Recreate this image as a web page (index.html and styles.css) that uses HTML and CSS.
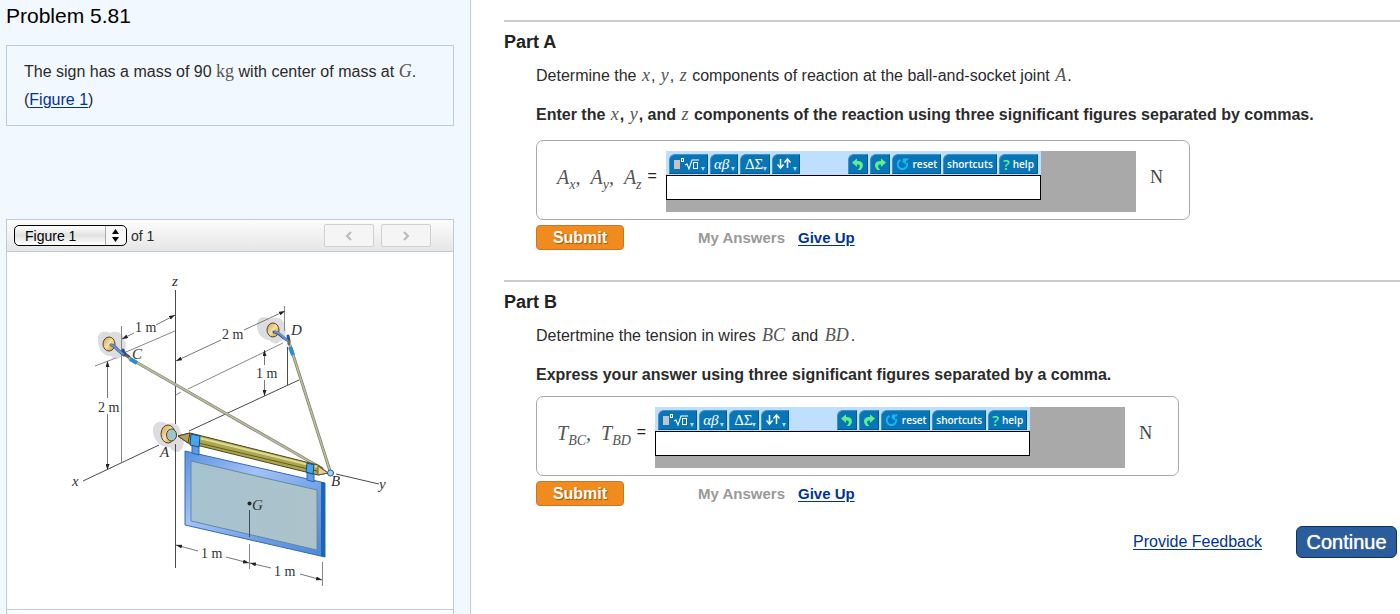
FILE: index.html
```html
<!DOCTYPE html>
<html lang="en">
<head>
<meta charset="utf-8">
<title>Problem 5.81</title>
<link rel="stylesheet" href="styles.css">
</head>
<body>
<svg class="defs" aria-hidden="true">
  <symbol id="i-template" viewBox="0 0 25 15">
    <rect x="0" y="3" width="6" height="9" fill="#c4c4c4"/>
    <rect x="7.500" y="1.500" width="2" height="3" fill="none" stroke="#fff"/>
    <path d="M11 8l2-1 2 5 3-9h7" fill="none" stroke="#fff" stroke-width="1.100"/>
    <rect x="19.500" y="5.500" width="4" height="6" fill="none" stroke="#fff"/>
  </symbol>
  <symbol id="i-arrows" viewBox="0 0 14 14">
    <path d="M3.500 2v8M10.500 11V3" stroke="#fff" stroke-width="1.500"/>
    <path d="M.5 7.500l3 3.500 3-3.500M7.500 5.500l3-3.500 3 3.500" fill="none" stroke="#fff" stroke-width="1.500"/>
  </symbol>
  <symbol id="i-undo" viewBox="0 0 14 14">
    <path d="M1 5.500l5-4V4c6-.5 8 5 3.500 9H6.500c3.500-3 3-6-.5-5.500V10z" fill="#5ff08a"/>
  </symbol>
  <symbol id="i-reset" viewBox="0 0 14 14">
    <path d="M4.500 3a4.700 4.700 0 1 0 6.500 3" fill="none" stroke="#16b7f5" stroke-width="2"/>
    <path d="M7 1.500h6l-1.500 2H10v4L6.500 5z" fill="#16b7f5"/>
  </symbol>
</svg>

<div class="page">
  <aside class="sidebar">
    <h1 class="problem-title">Problem 5.81</h1>
    <section class="statement">
      <p>The sign has a mass of 90 <span class="math upright">kg</span> with center of mass at <span class="math">G</span>.</p>
      <p>(<a href="#figure">Figure 1</a>)</p>
    </section>

    <section class="figure-panel" id="figure">
      <header class="figure-bar">
        <span class="picker">
          <select id="figure-select" aria-label="Figure"><option>Figure 1</option></select>
          <svg class="picker-arrows" viewBox="0 0 7 13" aria-hidden="true"><path d="M0 5l3.500-5L7 5zM0 8l3.500 5L7 8z"/></svg>
        </span>
        <label for="figure-select">of 1</label>
        <span class="pager">
          <button type="button" aria-label="Previous figure"><svg viewBox="0 0 8 10"><path d="M6 1L2 5l4 4"/></svg></button>
          <button type="button" aria-label="Next figure"><svg viewBox="0 0 8 10"><path d="M2 1l4 4-4 4"/></svg></button>
        </span>
      </header>
      <svg class="diagram" viewBox="7 252 446 357" role="img" aria-label="Sign hanging from a pole supported by two wires">
        <defs>
          <marker id="tip" viewBox="0 0 6 4" refX="6" refY="2" markerWidth="6" markerHeight="4" markerUnits="userSpaceOnUse" orient="auto-start-reverse"><path d="M0 0l6 2-6 2z" fill="#222"/></marker>
          <linearGradient id="frame" x1="0" y1="0" x2="1" y2="1"><stop offset="0" stop-color="#5a90e0"/><stop offset=".35" stop-color="#a4c2f6"/><stop offset=".7" stop-color="#6c9ce8"/><stop offset="1" stop-color="#4c86d8"/></linearGradient>
          <linearGradient id="inset" x1="0" y1="0" x2="1" y2="0"><stop offset="0" stop-color="#a6c2d0"/><stop offset="1" stop-color="#adc3ca"/></linearGradient>
          <linearGradient id="brass" x1="0" y1="0" x2="1" y2="1"><stop offset="0" stop-color="#c99f55"/><stop offset=".5" stop-color="#f6dfa6"/><stop offset="1" stop-color="#bd9418"/></linearGradient>
        </defs>
        <g fill="#dcdce1">
          <path d="M98 338c0-7 8-7 12-5 6-3 14 0 14 7 4 5 1 11-2 14-1 6-8 7-11 2-7 1-14-7-13-18z"/>
          <path d="M257 324c1-8 8-8 13-5 7-3 15 0 15 8 2 7 0 14-5 14-4 5-8 2-11-1-6 0-13-7-12-16z"/>
          <path d="M153 429c1-8 9-9 14-5 6-2 13 0 13 7 5 6 5 15 1 19-4 4-9 1-11-3-9 2-18-8-17-18z"/>
        </g>
        <g class="axes">
          <path d="M175.500 290V424M175.500 444V568M83 481L159 445M189 431L299 380M336 474L379 484M287.500 347V385"/>
        </g>
        <g class="guides">
          <path d="M121.500 326V462M95 366L116 358M126 352L175 331M176 395L181 392M188 389L283 343M284.500 306V331M249.500 544V569M322.500 562V586"/>
        </g>
        <g class="dims">
          <path marker-end="url(#tip)" d="M134 333L122 339"/>
          <path marker-end="url(#tip)" d="M156 325L175 315"/>
          <path marker-end="url(#tip)" d="M221 340L176 361"/>
          <path marker-end="url(#tip)" d="M244 330L285 311"/>
          <path marker-end="url(#tip)" d="M107.500 398V361"/>
          <path marker-end="url(#tip)" d="M107.500 414V470"/>
          <path marker-end="url(#tip)" d="M264.500 365V350"/>
          <path marker-end="url(#tip)" d="M264.500 380V396"/>
          <path marker-end="url(#tip)" d="M198 551L176 545"/>
          <path marker-end="url(#tip)" d="M226 557L249 563"/>
          <path marker-end="url(#tip)" d="M271 568L250 563"/>
          <path marker-end="url(#tip)" d="M300 574L322 580"/>
        </g>
        <g class="mount">
          <ellipse cx="109" cy="344" rx="6" ry="7" fill="url(#brass)"/>
          <ellipse cx="273" cy="330" rx="6" ry="7" fill="url(#brass)"/>
          <ellipse cx="168" cy="434" rx="7" ry="9" fill="url(#brass)"/>
          <ellipse cx="171.500" cy="435" rx="5" ry="6" fill="#9ec5ca"/>
        </g>
        <g fill="none" stroke-linecap="round">
          <path d="M111 345c3 0 5 3 8 6l5 4m-1-5l2 4 4 3M274 332c5 0 7 5 13 8m1-4l1 5v3" stroke="#31508d" stroke-width="3"/>
          <path d="M111 345c3 0 5 3 8 6l4 3M275 332c5 0 7 5 12 8" stroke="#6c92d4" stroke-width="2"/>
          <path d="M126 356l3 2M289 341l0 3" stroke="#7d702b" stroke-width="2"/>
        </g>
        <path d="M129 358L323 469M290 345L330 471" stroke="#85856b" stroke-width="3"/>
        <path d="M129 358L323 469M290 345L330 471" stroke="#bdbda4" stroke-width="1.500"/>
        <path d="M130 359L137 363M290 347L293 355" stroke="#258ed4" stroke-width="4"/>
        <path d="M185 451L321 482 325 483V557L185 525z" fill="url(#frame)" stroke="#356bb5"/>
        <path d="M321 482L325 483V557L321 556z" fill="#1d64b5"/>
        <path d="M191 461L317 490V550L191 521z" fill="url(#inset)" stroke="#64889f"/>
        <path d="M192 440h7v15l-7-2zM307 465h7v17l-7-2z" fill="#5c9be8" stroke="#2e64ad"/>
        <path d="M178 436L190 433 318 465 328 473 318 475 188 443z" fill="#aaa54f" stroke="#4a4620"/>
        <path d="M191 436L318 467" stroke="#dfda8c" stroke-width="2"/>
        <path d="M190 441L317 471" stroke="#5f5a20"/>
        <path d="M178 436L190 433 188 443z" fill="#b5a168" stroke="#4a4620"/>
        <path d="M318 466L328 473 318 475z" fill="#e4cf98" stroke="#6a5c32"/>
        <path d="M191 434l9 2-1 11-9-2zM307 463l7 2-1 9-7-2z" fill="#4aa5e8" stroke="#174a85"/>
        <circle cx="330.500" cy="473" r="3" fill="#9cd2fb" stroke="#245a8c"/>
        <circle cx="249.500" cy="503.500" r="2" fill="#222"/>
        <path d="M249.500 510V537" stroke="#3c5060"/>
        <g class="dim-text">
          <text x="135" y="332">1 m</text><text x="222" y="339">2 m</text>
          <text x="256" y="378">1 m</text><text x="98" y="412">2 m</text>
          <text x="201" y="558">1 m</text><text x="274" y="576">1 m</text>
        </g>
        <g class="point-text">
          <text x="172" y="286">z</text><text x="72" y="486">x</text><text x="379" y="489">y</text>
          <text x="132" y="359">C</text><text x="291" y="335">D</text><text x="160" y="457">A</text>
          <text x="331" y="486">B</text><text x="252" y="510">G</text>
        </g>
      </svg>
      <div class="figure-foot"></div>
    </section>
  </aside>

  <main class="main">
    <section class="part part-a">
      <h2>Part A</h2>
      <div class="part-body">
        <p>Determine the <span class="math">x</span>, <span class="math">y</span>, <span class="math">z</span> components of reaction at the ball-and-socket joint <span class="math">A</span>.</p>
        <p class="instruction">Enter the <span class="math">x</span>, <span class="math">y</span>, and <span class="math">z</span> components of the reaction using three significant figures separated by commas.</p>
        <div class="answer">
          <label class="answer-label" for="answer-a"><span class="term">A<sub>x</sub>,</span><span class="term">A<sub>y</sub>,</span><span class="term">A<sub>z</sub></span><span class="equals">=</span></label>
          <div class="editor">
            <div class="editor-inner">
              <div class="toolbar">
                <button type="button" class="tool drop template" aria-label="Templates"><svg><use href="#i-template"/></svg></button>
                <button type="button" class="tool drop greek"><i>αβ</i></button>
                <button type="button" class="tool drop sums">ΔΣ</button>
                <button type="button" class="tool drop arrows" aria-label="Arrows"><svg><use href="#i-arrows"/></svg></button>
                <span class="spacer"></span>
                <button type="button" class="tool square" aria-label="Undo"><svg><use href="#i-undo"/></svg></button>
                <button type="button" class="tool square redo" aria-label="Redo"><svg><use href="#i-undo"/></svg></button>
                <button type="button" class="tool reset"><svg><use href="#i-reset"/></svg>reset</button>
                <button type="button" class="tool shortcuts">shortcuts</button>
                <button type="button" class="tool help"><span class="question">?</span>help</button>
              </div>
              <input class="answer-input" id="answer-a" type="text">
            </div>
          </div>
          <span class="unit">N</span>
        </div>
        <div class="actions"><button type="button" class="submit">Submit</button><span class="my-answers">My Answers</span><a href="#give-up-a">Give Up</a></div>
      </div>
    </section>

    <section class="part part-b">
      <h2>Part B</h2>
      <div class="part-body">
        <p>Detertmine the tension in wires <span class="math wide">BC</span> and <span class="math wide">BD</span>.</p>
        <p class="instruction">Express your answer using three significant figures separated by a comma.</p>
        <div class="answer">
          <label class="answer-label" for="answer-b"><span class="term">T<sub>BC</sub>,</span><span class="term">T<sub>BD</sub></span><span class="equals">=</span></label>
          <div class="editor">
            <div class="editor-inner">
              <div class="toolbar">
                <button type="button" class="tool drop template" aria-label="Templates"><svg><use href="#i-template"/></svg></button>
                <button type="button" class="tool drop greek"><i>αβ</i></button>
                <button type="button" class="tool drop sums">ΔΣ</button>
                <button type="button" class="tool drop arrows" aria-label="Arrows"><svg><use href="#i-arrows"/></svg></button>
                <span class="spacer"></span>
                <button type="button" class="tool square" aria-label="Undo"><svg><use href="#i-undo"/></svg></button>
                <button type="button" class="tool square redo" aria-label="Redo"><svg><use href="#i-undo"/></svg></button>
                <button type="button" class="tool reset"><svg><use href="#i-reset"/></svg>reset</button>
                <button type="button" class="tool shortcuts">shortcuts</button>
                <button type="button" class="tool help"><span class="question">?</span>help</button>
              </div>
              <input class="answer-input" id="answer-b" type="text">
            </div>
          </div>
          <span class="unit">N</span>
        </div>
        <div class="actions"><button type="button" class="submit">Submit</button><span class="my-answers">My Answers</span><a href="#give-up-b">Give Up</a></div>
      </div>
    </section>

    <footer class="footer">
      <a href="#feedback">Provide Feedback</a>
      <button type="button" class="continue">Continue</button>
    </footer>
  </main>
</div>
</body>
</html>
```

FILE: styles.css
```css
* { box-sizing: border-box; }

body {
  margin: 0;
  background: #fff;
  color: #2b2b2b;
  font: 16px/20px "Liberation Sans", Arial, sans-serif;
}

h1, h2, p { margin: 0; }
a { color: #003399; text-underline-offset: 2px; }
button, input, select { font-family: inherit; margin: 0; }
.defs { display: none; }

.page { display: flex; min-height: 100vh; }

/* Sidebar */
.sidebar {
  display: flex;
  flex-direction: column;
  flex: 0 0 471px;
  padding: 4px 16px 0 6px;
  background: #f2f8ff;
  border-right: 1px solid #b9cde0;
}

.problem-title { color: #000; font-size: 21px; font-weight: 400; line-height: 24px; }

.statement {
  margin: 17px 0 93px;
  padding: 12px 17px 11px;
  border: 1px solid #b9cde0;
  line-height: 28px;
}

.math {
  padding: 0 1px;
  color: #555;
  font: italic 18px/16px "Liberation Serif", "Times New Roman", serif;
}
.math.upright { font-style: normal; }
.math.wide { padding: 0 2px; }
.statement .math { padding: 0; }

.figure-panel {
  display: flex;
  flex-direction: column;
  flex: 1;
  background: #fff;
  border: 1px solid #b9cde0;
  border-bottom: 0;
}

.figure-bar {
  display: flex;
  align-items: center;
  gap: 4px;
  height: 32px;
  padding: 0 22px 0 7px;
  background: linear-gradient(#fdfdfd, #e6e6e6);
  border-bottom: 1px solid #b9cde0;
  font-size: 14px;
}

.picker { position: relative; display: flex; }
.picker select {
  width: 113px;
  height: 21px;
  padding: 0 10px;
  appearance: none;
  border: 1px solid #000;
  border-radius: 5px;
  background: linear-gradient(90deg, transparent 90px, #aaa 90px, #aaa 91px, #f7f7f7 91px), linear-gradient(#fff, #e2e2e2 50%, #fff);
  color: #000;
  font-size: 14px;
}
.picker-arrows { position: absolute; top: 4px; right: 8px; width: 7px; height: 13px; pointer-events: none; }

.pager { display: flex; gap: 7px; margin-left: auto; }
.pager button {
  display: grid;
  place-items: center;
  width: 50px;
  height: 23px;
  padding: 0;
  border: 1px solid #d0d0d0;
  border-radius: 2px;
  background: #f5f5f5;
}
.pager svg { width: 8px; height: 10px; fill: none; stroke: #b9b9b9; stroke-width: 2; }

.diagram { display: block; width: 100%; font-family: "Liberation Serif", serif; }
.axes path { fill: none; stroke: #4a4a4a; }
.guides path { fill: none; stroke: #888; }
.dims path { fill: none; stroke: #777; }
.mount ellipse { stroke: #54461d; }
.dim-text { font-size: 14px; fill: #333; }
.point-text { font-size: 15px; font-style: italic; fill: #333; }
.figure-foot { flex: 1; min-height: 5px; border-top: 1px solid #b9cde0; }

/* Parts */
.main { flex: 1; min-width: 0; padding: 20px 0 0 33px; }
.part { border-top: 2px solid #ccc; }
.part h2 { padding-top: 8px; color: #222; font-size: 18px; line-height: 24px; }
.part-body { padding: 12px 0 0 32px; }
.instruction { margin-top: 19px; font-weight: 700; }

.answer {
  display: flex;
  align-items: flex-start;
  width: fit-content;
  height: 80px;
  margin-top: 15px;
  padding: 10px 26px 0 20px;
  border: 1px solid #a9a9a9;
  border-radius: 7px;
}
.part-b .answer { margin-top: 11px; }

.answer-label {
  display: flex;
  gap: 10px;
  margin: 14px 9px 0 0;
  color: #555;
  font: italic 20px/24px "Liberation Serif", "Times New Roman", serif;
}
.answer-label sub { font-size: 14px; line-height: 0; }
.equals { margin-left: -4px; color: #222; font: 16px/22px "Liberation Sans", Arial, sans-serif; }

.editor { width: 470px; padding-bottom: 12px; background: #a9a9a9; }
.editor-inner { width: 375px; }
.toolbar { display: flex; gap: 2px; padding: 3px 3px 1px; background: #bfdfff; }
.spacer { flex: 1; }

.tool {
  position: relative;
  display: flex;
  align-items: center;
  justify-content: center;
  gap: 3px;
  height: 20px;
  padding: 0;
  border: 1px solid;
  border-color: #3f91c3 #045a91 #045a91 #3f91c3;
  border-radius: 6px 0 0 0;
  background: #0875b7;
  color: #fff;
  font: 600 10px/16px "Open Sans", "Noto Sans", sans-serif;
}
.tool svg { width: 14px; height: 14px; }
.drop { justify-content: flex-start; padding-left: 4px; font: 15px/16px "Liberation Serif", serif; }
.drop::after {
  content: "";
  position: absolute;
  right: 2px;
  bottom: 2px;
  border: 2px solid transparent;
  border-top: 4px solid #a9dcff;
  border-bottom: 0;
}
.template { width: 39px; }
.template svg { width: 25px; height: 15px; }
.greek { width: 28px; padding-left: 3px; }
.sums { width: 30px; }
.arrows { width: 28px; }
.square { width: 20px; }
.redo svg { transform: scaleX(-1); }
.reset { width: 49px; }
.shortcuts { width: 54px; }
.help { width: 39px; }
.question { color: #5ff08a; font-size: 15px; }

.answer-input {
  display: block;
  width: 100%;
  height: 25px;
  padding: 0 4px;
  border: 1px solid #000;
  border-radius: 0;
  background: #fff;
  font-size: 16px;
}
.unit { margin: 14px 0 0 14px; color: #444; font: 18px/24px "Liberation Serif", "Times New Roman", serif; }

.actions { display: flex; align-items: center; margin: 5px 0 30px; font-size: 15px; font-weight: 700; }
.submit {
  width: 88px;
  height: 25px;
  padding: 0;
  border: 1px solid #cf7129;
  border-radius: 4px;
  background: #f08c1d;
  color: #fff;
  font-size: 16px;
  font-weight: 700;
  text-shadow: 1px 1px 1px #9a5510;
}
.my-answers { margin: 0 13px 0 74px; color: #999; }

.part-b .actions { margin-bottom: 0; }
.footer { display: flex; align-items: center; justify-content: flex-end; gap: 34px; padding: 20px 3px 0 0; }
.continue {
  width: 101px;
  height: 32px;
  padding: 0;
  border: 1px solid #073567;
  border-radius: 6px;
  background: #2b5c9b;
  color: #fff;
  font-size: 20px;
  text-shadow: 0 0 1px #fff;
}
```
